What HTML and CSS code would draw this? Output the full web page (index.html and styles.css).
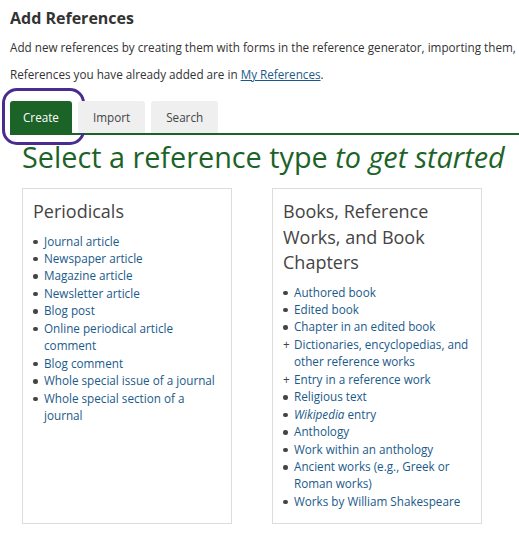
FILE: index.html
```html
<!DOCTYPE html>
<html>
<head>
<meta charset="utf-8">
<link rel="stylesheet" href="styles.css">
</head>
<body>
<div class="page">
  <h1 class="title">Add References</h1>
  <p class="intro">Add new references by creating them with forms in the reference generator, importing them, or searching for them.</p>
  <p class="intro">References you have already added are in <a href="#" class="link">My References</a>.</p>
  <div class="tabs">
    <div class="tab active">Create<span class="focus-ring"></span></div>
    <div class="tab">Import</div>
    <div class="tab">Search</div>
  </div>
  <div class="content">
    <h2 class="headline">Select a reference type <em>to get started</em></h2>
    <div class="cards">
      <div class="card">
        <h3 class="card-title">Periodicals</h3>
        <ul class="list">
          <li><a href="#">Journal article</a></li>
          <li><a href="#">Newspaper article</a></li>
          <li><a href="#">Magazine article</a></li>
          <li><a href="#">Newsletter article</a></li>
          <li><a href="#">Blog post</a></li>
          <li><a href="#">Online periodical article comment</a></li>
          <li><a href="#">Blog comment</a></li>
          <li><a href="#">Whole special issue of a journal</a></li>
          <li><a href="#">Whole special section of a journal</a></li>
        </ul>
      </div>
      <div class="card">
        <h3 class="card-title">Books, Reference Works, and Book Chapters</h3>
        <ul class="list">
          <li><a href="#">Authored book</a></li>
          <li><a href="#">Edited book</a></li>
          <li><a href="#">Chapter in an edited book</a></li>
          <li class="plus"><a href="#">Dictionaries, encyclopedias, and other reference works</a></li>
          <li class="plus"><a href="#">Entry in a reference work</a></li>
          <li><a href="#">Religious text</a></li>
          <li><a href="#"><em>Wikipedia</em> entry</a></li>
          <li><a href="#">Anthology</a></li>
          <li><a href="#">Work within an anthology</a></li>
          <li><a href="#">Ancient works (e.g., Greek or Roman works)</a></li>
          <li><a href="#">Works by William Shakespeare</a></li>
        </ul>
      </div>
    </div>
  </div>
</div>
</body>
</html>
```
FILE: styles.css
```css
html, body {
  margin: 0;
  padding: 0;
  background: #fff;
}
body {
  font-family: "Open Sans", "Liberation Sans", sans-serif;
  color: #333;
  overflow: hidden;
}
.page {
  padding: 7px 0 0 10px;
  width: 760px;
}
.title {
  font-size: 16px;
  font-weight: 700;
  line-height: 22px;
  margin: 0 0 9px;
  color: #333;
}
.intro {
  font-size: 11.7px;
  line-height: 18px;
  margin: 0 0 9px;
  white-space: nowrap;
}
.link {
  color: #1a5a8a;
  text-decoration: underline;
}
.tabs {
  display: flex;
  gap: 6px;
  margin-top: 18px;
  border-bottom: 2px solid #1d6327;
  width: 560px;
}
.tab {
  position: relative;
  height: 32px;
  padding: 0 15px;
  display: flex;
  align-items: center;
  font-size: 11.7px;
  background: #efefef;
  color: #444;
  border-radius: 3px 3px 0 0;
}
.tab.active {
  background: #1b6327;
  color: #fff;
  padding: 0 13px;
}
.focus-ring {
  position: absolute;
  left: -8px;
  top: -13px;
  right: -13px;
  bottom: -12px;
  border: 3px solid #4a2c8e;
  border-radius: 15px;
}
.content {
  padding-left: 12px;
}
.headline {
  font-size: 28.8px;
  font-weight: 400;
  color: #1b6327;
  margin: 2px 0 11px;
  line-height: 40px;
  white-space: nowrap;
}
.headline em {
  font-style: italic;
}
.cards {
  display: grid;
  grid-template-columns: 210px 210px;
  gap: 40px;
}
.card {
  border: 1px solid #dcdcdc;
  padding: 10px 10px 14px;
  height: 336px;
  box-sizing: border-box;
}
.card-title {
  font-size: 18px;
  font-weight: 400;
  line-height: 25.5px;
  color: #444;
  margin: 0 0 8px;
}
.list {
  list-style: none;
  margin: 0;
  padding: 0;
}
.list li {
  position: relative;
  font-size: 11.7px;
  line-height: 17.45px;
  padding-left: 11px;
}
.list li::before {
  content: "";
  position: absolute;
  left: 0;
  top: 7px;
  width: 4.5px;
  height: 4.5px;
  border-radius: 50%;
  background: #444;
}
.list li.plus::before {
  content: "+";
  background: none;
  width: auto;
  height: auto;
  top: 0;
  left: 0;
  font-size: 11.7px;
  color: #444;
}
.list a {
  color: #1a5a8a;
  text-decoration: none;
}
```
